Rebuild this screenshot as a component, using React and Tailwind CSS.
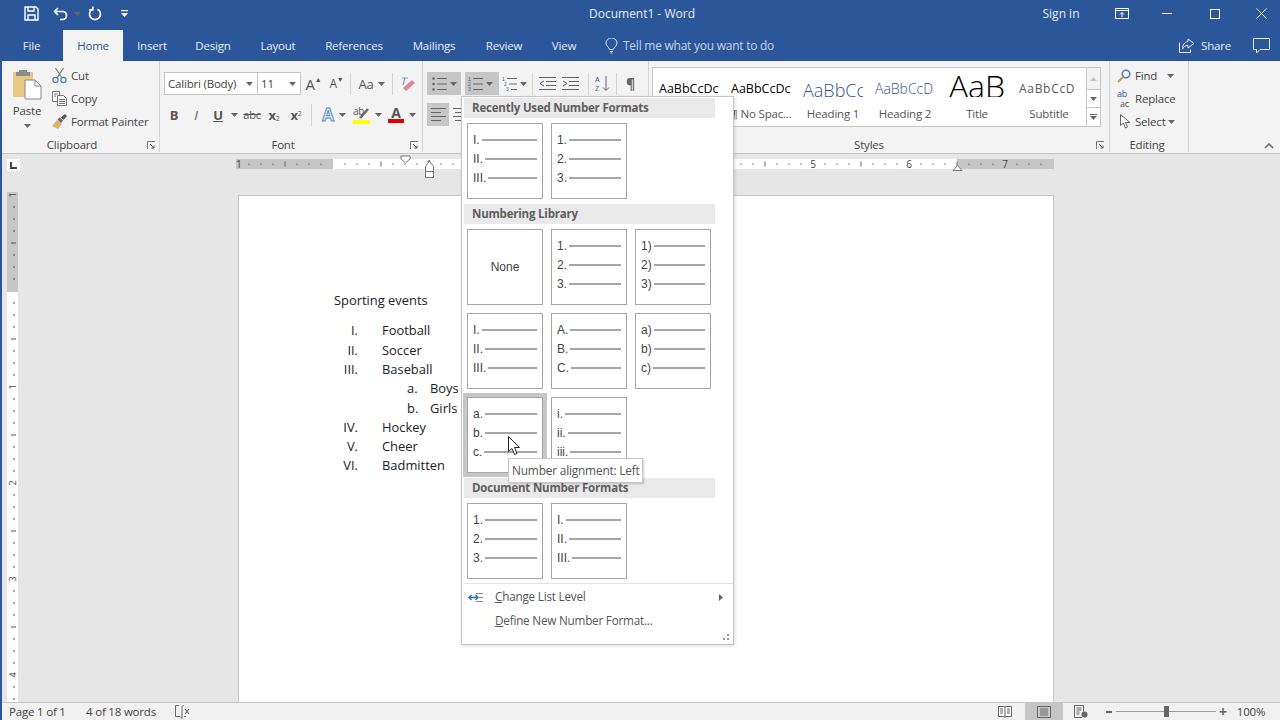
import React from "react";

const Caret = ({ className = "" }) => (
  <svg width="7" height="4" viewBox="0 0 7 4" className={className}>
    <path d="M0 0h7L3.5 4z" fill="#666" />
  </svg>
);

const Launcher = () => (
  <svg width="9" height="9" viewBox="0 0 9 9" fill="none" stroke="#777">
    <path d="M.5 8V.5H8" />
    <path d="M3 3l4 4M7 4.5V7H4.5" stroke="#555" />
  </svg>
);

function TitleBar() {
  return (
    <div className="flex h-[30px] items-center bg-[#2b579a] pb-[3px] text-[12px] tracking-normal text-[#e6ecf5]">
      <div className="flex w-[22px]" />
      <svg width="15" height="15" viewBox="0 0 15 15" fill="none" stroke="#fff" strokeWidth="1.4">
        <path d="M1 1h11l2 2v11H1z" />
        <path d="M4 1v4h6V1M4 14V9h7v5" />
      </svg>
      <svg className="ml-[14px]" width="16" height="15" viewBox="0 0 16 15" fill="none" stroke="#fff" strokeWidth="1.6">
        <path d="M5 2L1.5 5.5 5 9" />
        <path d="M2 5.5h7.5a4 4 0 0 1 0 8H7" />
      </svg>
      <Caret className="ml-[5px]" />
      <svg className="ml-[6px]" width="16" height="15" viewBox="0 0 16 15" fill="none" stroke="#fff" strokeWidth="1.6">
        <path d="M5.5 3.2a5.5 5.5 0 1 0 5 0" />
        <path d="M5.8 .5v3.4H2.2" />
      </svg>
      <svg className="ml-[18px]" width="7" height="8" viewBox="0 0 7 8" fill="#fff">
        <path d="M0 0h7v1.200H0zM0 3h7L3.500 7z" />
      </svg>
      <div className="ml-[459px] w-[110px] text-center">Document1 - Word</div>
      <div className="ml-[339px] w-[50px] text-center">Sign in</div>
      <svg className="ml-[29px]" width="14" height="11" viewBox="0 0 14 11" fill="none" stroke="#fff">
        <path d="M.5.5h13v10H.5zM.5 2.500h13M7 9V4.500M5 6.500l2-2 2 2" />
      </svg>
      <div className="ml-[33px] h-px w-[10px] bg-white" />
      <div className="ml-[38px] h-[10px] w-[10px] border border-white" />
      <svg className="ml-[36px]" width="11" height="11" viewBox="0 0 11 11" stroke="#fff">
        <path d="M.5.5l10 10M10.500.5l-10 10" />
      </svg>
    </div>
  );
}

function TabRow() {
  const tabs = [
    { name: "Insert", w: "w-[58px]" },
    { name: "Design", w: "w-[64px]" },
    { name: "Layout", w: "w-[66px]" },
    { name: "References", w: "w-[86px]" },
    { name: "Mailings", w: "w-[74px]" },
    { name: "Review", w: "w-[66px]" },
    { name: "View", w: "w-[54px]" },
  ];
  return (
    <div className="flex h-[31px] items-center bg-[#2b579a] text-[11.5px] text-[#e6ecf5]">
      <div className="w-[61px] pr-[2px] text-center">File</div>
      <div className="flex h-full w-[60px] items-center justify-center bg-[#f3f3f3] text-[#2b579a]">Home</div>
      {tabs.map((t) => (
        <div key={t.name} className={`${t.w} text-center`}>
          {t.name}
        </div>
      ))}
      <svg className="ml-[14px]" width="13" height="16" viewBox="0 0 13 16" fill="none" stroke="#dbe4f1">
        <path d="M4.500 11.500C4 9 1 8 1 5a5.500 5 0 0 1 11 0c0 3-3 4-3.500 6.500zM5 13.500h3M5.500 15h2" />
      </svg>
      <div className="ml-[5px] text-[12px] tracking-[-0.25px] text-[#c3d2e8]">Tell me what you want to do</div>
      <svg className="ml-[405px]" width="16" height="15" viewBox="0 0 16 15" fill="none" stroke="#e6ecf5">
        <path d="M.5 4.500v10h11v-3" />
        <path d="M9 1l6 4.500L9 10V7.500C6 7.500 4.500 9 3.500 11c0-4 2-7 5.500-7.500z" />
      </svg>
      <div className="ml-[4px] w-[34px] text-center">Share</div>
      <svg className="ml-[20px]" width="17" height="16" viewBox="0 0 17 16" fill="none" stroke="#e6ecf5">
        <path d="M.5.5h16v11H7l-3.500 3.500v-3.500H.5z" />
      </svg>
    </div>
  );
}

function ClipboardGroup() {
  return (
    <div className="flex h-full w-[158px] shrink-0 flex-col border-r border-[#d4d4d4]">
      <div className="flex h-[77px]">
        <div className="flex w-[50px] flex-col items-center pt-[7px]">
          <svg width="30" height="32" viewBox="0 0 30 32">
            <path d="M1 4h20v25H1z" fill="#e8c887" />
            <path d="M7 2h8v2h3v4H4V4h3z" fill="#8b8b8b" />
            <path d="M13 12h10l6 6v13H13z" fill="#fff" stroke="#888" />
            <path d="M23 12v6h6" fill="none" stroke="#888" />
          </svg>
          <div className="mt-[2px] leading-[18px]">Paste</div>
          <Caret className="mt-[4px]" />
        </div>
        <div className="flex flex-col pt-[3px]">
          <div className="flex h-[23px] items-center">
            <svg width="15" height="17" viewBox="0 0 15 17" fill="none" stroke="#4f7cb5" strokeWidth="1.2">
              <circle cx="3.500" cy="13" r="2.600" />
              <circle cx="11.500" cy="13" r="2.600" />
              <path d="M5 11L11.500 1M10 11L3.500 1" stroke="#777" />
            </svg>
            <span className="ml-[4px]">Cut</span>
          </div>
          <div className="flex h-[23px] items-center">
            <svg width="15" height="15" viewBox="0 0 15 15" fill="#fff" stroke="#777">
              <path d="M.5.5h7v10h-7z" />
              <path d="M5.500 4.500h6l3 3v7h-9z" />
              <path d="M7 8.500h6M7 10.500h6M7 12.500h6M2 3h4M2 5h2" fill="none" />
            </svg>
            <span className="ml-[4px]">Copy</span>
          </div>
          <div className="flex h-[23px] items-center">
            <svg width="15" height="15" viewBox="0 0 15 15">
              <path d="M0 12l5-6 5 4-4 5z" fill="#e0b26a" />
              <path d="M5.500 5.500l2-2 3.500 3-2 2.500z" fill="#666" />
              <path d="M9 3.500L13 0l2 2-3.500 4z" fill="#555" />
            </svg>
            <span className="ml-[4px]">Format Painter</span>
          </div>
        </div>
      </div>
      <div className="flex h-[14px] items-center">
        <div className="w-[140px] text-center">Clipboard</div>
        <div className="ml-[5px] flex">
          <Launcher />
        </div>
      </div>
    </div>
  );
}

function FontGroup() {
  return (
    <div className="flex h-full w-[263px] shrink-0 flex-col border-r border-[#d4d4d4]">
      <div className="h-[77px] pl-[4px] pt-[11px]">
        <div className="flex h-[23px] items-center">
          <div className="flex h-[23px] w-[94px] items-center justify-between border border-[#c6c6c6] bg-white pl-[3px] pr-[4px]">
            <span>Calibri (Body)</span>
            <Caret />
          </div>
          <div className="flex h-[23px] w-[43px] items-center justify-between border border-l-0 border-[#c6c6c6] bg-white pl-[3px] pr-[4px]">
            <span>11</span>
            <Caret />
          </div>
          <div className="flex w-[22px] items-center justify-center pl-[3px] text-[15px] text-[#555]">
            A<span className="-mt-[8px] text-[7px]">▲</span>
          </div>
          <div className="ml-[1px] flex w-[22px] items-center justify-center pl-[3px] text-[12px] text-[#555]">
            A<span className="-mt-[8px] text-[7px]">▼</span>
          </div>
          <div className="ml-[4px] h-[22px] w-px bg-[#d4d4d4]" />
          <div className="flex w-[41px] items-center justify-center gap-[4px] text-[13px] text-[#555]">
            Aa
            <Caret />
          </div>
          <div className="h-[22px] w-px bg-[#d4d4d4]" />
          <svg className="ml-[7px]" width="16" height="16" viewBox="0 0 16 16">
            <path d="M6 15l9-8-3-3-9 8z" fill="#e8818f" />
            <path d="M2 2h6M5 2L3 9" stroke="#7a9cc6" strokeWidth="1.200" fill="none" />
          </svg>
        </div>
        <div className="mt-[8px] flex h-[23px] items-center text-[#555]">
          <div className="w-[20px] text-center text-[13px] font-bold">B</div>
          <div className="ml-[2px] w-[20px] text-center text-[13px] italic">I</div>
          <div className="ml-[2px] w-[20px] text-center text-[13px] font-bold underline">U</div>
          <Caret className="ml-[3px]" />
          <div className="ml-[3px] w-[22px] text-center text-[11px] line-through">abc</div>
          <div className="w-[22px] text-center text-[13px] font-bold">
            x<sub className="text-[7px] font-normal">2</sub>
          </div>
          <div className="w-[22px] text-center text-[13px] font-bold">
            x<sup className="text-[7px] font-normal">2</sup>
          </div>
          <div className="ml-[4px] h-[22px] w-px bg-[#d4d4d4]" />
          <div className="ml-[8px] w-[16px] text-center text-[17px] font-bold text-[#e8f0fa] [-webkit-text-stroke:1px_#5b8fc9]">A</div>
          <Caret className="ml-[3px]" />
          <svg className="ml-[7px]" width="17" height="18" viewBox="0 0 17 18">
            <text x="0" y="9" fontSize="10" fill="#555" fontFamily="Open Sans">ab</text>
            <path d="M7 12L15 3" stroke="#666" strokeWidth="2.500" />
            <rect x="0" y="14" width="17" height="4" fill="#ffff00" />
          </svg>
          <Caret className="ml-[5px]" />
          <div className="ml-[6px] flex w-[16px] flex-col items-center">
            <span className="h-[13px] text-[14px] font-bold leading-[13px]">A</span>
            <div className="h-[4px] w-[16px] bg-[#e00000]" />
          </div>
          <Caret className="ml-[5px]" />
        </div>
      </div>
      <div className="flex h-[14px] items-center">
        <div className="w-[246px] text-center">Font</div>
        <div className="ml-[4px] flex">
          <Launcher />
        </div>
      </div>
    </div>
  );
}

function ListIcon({ kind }) {
  return (
    <svg width="15" height="14" viewBox="0 0 15 14" fill="none" stroke="#666">
      <path d={kind === "multi" ? "M5 1.500h10M7 7h8M9 12.500h6" : "M5 1.500h10M5 7h10M5 12.500h10"} />
      {kind === "bullet" ? (
        <g fill="#666" stroke="none">
          <circle cx="1.500" cy="1.500" r="1.300" />
          <circle cx="1.500" cy="7" r="1.300" />
          <circle cx="1.500" cy="12.500" r="1.300" />
        </g>
      ) : (
        <g fill="#2b579a" stroke="none" fontSize="5" fontFamily="Liberation Sans">
          <text x="0" y="4">1</text>
          <text x={kind === "multi" ? "2" : "0"} y="9">2</text>
          <text x={kind === "multi" ? "4" : "0"} y="14">3</text>
        </g>
      )}
    </svg>
  );
}

function ParagraphGroup() {
  return (
    <div className="h-full w-[226px] shrink-0 border-r border-[#d4d4d4] pl-[4px] pt-[11px]">
      <div className="flex h-[23px] items-center">
        <div className="flex h-[23px] w-[34px] items-center justify-center gap-[3px] bg-[#c6c6c6]">
          <ListIcon kind="bullet" />
          <Caret />
        </div>
        <div className="ml-[4px] flex h-[23px] w-[34px] items-center gap-[3px] bg-[#c6c6c6] pl-[3px]">
          <ListIcon kind="num" />
          <Caret />
        </div>
        <div className="ml-[3px] flex items-center gap-[3px]">
          <ListIcon kind="multi" />
          <Caret />
        </div>
        <div className="ml-[5px] h-[22px] w-px bg-[#d4d4d4]" />
        <svg className="ml-[6px]" width="17" height="13" viewBox="0 0 17 13" fill="none" stroke="#666">
          <path d="M0 .5h17M7 4.500h10M7 8.500h10M0 12.500h17" />
          <path d="M5 4L1 6.500 5 9" stroke="#2b579a" />
        </svg>
        <svg className="ml-[6px]" width="17" height="13" viewBox="0 0 17 13" fill="none" stroke="#666">
          <path d="M0 .5h17M7 4.500h10M7 8.500h10M0 12.500h17" />
          <path d="M1 4l4 2.500L1 9" stroke="#2b579a" />
        </svg>
        <div className="ml-[9px] h-[22px] w-px bg-[#d4d4d4]" />
        <svg className="ml-[6px]" width="15" height="17" viewBox="0 0 15 17" fill="none" stroke="#666">
          <path d="M11 1v14M8 12.500l3 3 3-3" />
          <text x="0" y="7" fontSize="7" fill="#2b579a" stroke="none" fontFamily="Liberation Sans">A</text>
          <text x="0" y="16" fontSize="7" fill="#666" stroke="none" fontFamily="Liberation Sans">Z</text>
        </svg>
        <div className="ml-[6px] h-[22px] w-px bg-[#d4d4d4]" />
        <div className="ml-[9px] text-[14px] font-bold leading-none text-[#666]">¶</div>
      </div>
      <div className="mt-[8px] flex h-[23px] items-center">
        <div className="flex h-[23px] w-[22px] items-center justify-center bg-[#c6c6c6]">
          <svg width="15" height="13" viewBox="0 0 15 13" stroke="#666">
            <path d="M0 .5h15M0 4.500h10M0 8.500h15M0 12.500h10" />
          </svg>
        </div>
        <svg className="ml-[4px]" width="9" height="13" viewBox="0 0 9 13" stroke="#666">
          <path d="M0 .5h9M2 4.500h7M0 8.500h9M2 12.500h7" />
        </svg>
      </div>
    </div>
  );
}

function StylesGroup() {
  const styles = [
    { name: "¶ Normal", preview: "AaBbCcDc", cls: "pt-[7px] text-[12.5px] tracking-normal text-black" },
    { name: "¶ No Spac...", preview: "AaBbCcDc", cls: "pt-[7px] text-[12.5px] tracking-normal text-black" },
    { name: "Heading 1", preview: "AaBbCc", cls: "pt-[8px] text-[18px] font-light tracking-normal text-[#2f5496]" },
    { name: "Heading 2", preview: "AaBbCcD", cls: "pt-[7px] text-[14px] font-light tracking-normal text-[#2f5496]" },
    { name: "Title", preview: "AaB", cls: "justify-center text-[32px] font-light leading-none tracking-normal text-black" },
    { name: "Subtitle", preview: "AaBbCcD", cls: "pt-[7px] text-[12px] tracking-[0.7px] text-[#5a5a5a]" },
  ];
  return (
    <div className="flex h-full w-[461px] shrink-0 flex-col border-r border-[#d4d4d4] pl-[3px] pt-[6px]">
      <div className="flex h-[60px] w-[449px] border border-[#c6c6c6] bg-white">
        {styles.map((s) => (
          <div key={s.name} className="flex w-[72px] shrink-0 flex-col items-center">
            <div className={`mt-[6px] flex h-[23px] w-[60px] items-center overflow-hidden whitespace-nowrap ${s.cls}`}>
              {s.preview}
            </div>
            <div className="mt-[8px] whitespace-nowrap leading-[18px] text-[#555]">{s.name}</div>
          </div>
        ))}
        <div className="ml-auto flex w-[14px] flex-col border-l border-[#c6c6c6]">
          <div className="flex h-[21px] items-center justify-center bg-[#f3f3f3]">
            <svg width="7" height="4" viewBox="0 0 7 4">
              <path d="M0 4h7L3.500 0z" fill="#c6c6c6" />
            </svg>
          </div>
          <div className="flex h-[19px] items-center justify-center border-y border-[#c6c6c6]">
            <Caret />
          </div>
          <div className="flex flex-1 flex-col items-center justify-center gap-[1px]">
            <div className="h-px w-[7px] bg-[#666]" />
            <Caret />
          </div>
        </div>
      </div>
      <div className="mt-[11px] flex h-[14px] items-center">
        <div className="w-[434px] text-center">Styles</div>
        <div className="ml-[10px] flex">
          <Launcher />
        </div>
      </div>
    </div>
  );
}

function EditingGroup() {
  return (
    <div className="flex h-full w-[79px] shrink-0 flex-col border-r border-[#d4d4d4]">
      <div className="h-[77px] pl-[7px] pt-[3px]">
        <div className="flex h-[23px] items-center">
          <svg width="14" height="14" viewBox="0 0 14 14" fill="none">
            <circle cx="9" cy="5" r="3.800" stroke="#4f7cb5" strokeWidth="1.500" />
            <path d="M6 8L1 13" stroke="#c79a4b" strokeWidth="2" />
          </svg>
          <span className="ml-[4px]">Find</span>
          <Caret className="ml-[10px]" />
        </div>
        <div className="flex h-[23px] items-center">
          <span className="flex w-[16px] flex-col text-[9px] leading-[10px]">
            <span className="text-[#2b579a]">ab</span>
            <span className="pl-[3px] text-[#555]">ac</span>
          </span>
          <span className="ml-[2px]">Replace</span>
        </div>
        <div className="flex h-[23px] items-center">
          <svg className="ml-[3px]" width="11" height="15" viewBox="0 0 11 15" fill="#fff" stroke="#666">
            <path d="M.5.500v11l3-2.500 2 5 2-1-2-4.500h4.500z" />
          </svg>
          <span className="ml-[4px]">Select</span>
          <Caret className="ml-[2px]" />
        </div>
      </div>
      <div className="flex h-[14px] items-center">
        <div className="w-[74px] text-center">Editing</div>
      </div>
    </div>
  );
}

function Ribbon() {
  return (
    <div className="flex h-[93px] border-b border-[#c6c6c6] bg-[#f3f3f3] pb-[1px] text-[11.5px] leading-[14px] text-[#444]">
      <ClipboardGroup />
      <FontGroup />
      <ParagraphGroup />
      <StylesGroup />
      <EditingGroup />
      <div className="flex flex-1 items-end justify-end pb-[3px] pr-[6px]">
        <svg width="10" height="6" viewBox="0 0 10 6" fill="none" stroke="#666" strokeWidth="1.500">
          <path d="M1 5l4-4 4 4" />
        </svg>
      </div>
    </div>
  );
}

function HRuler() {
  const ticks = [];
  for (let k = -7; k < 60; k++) ticks.push(k * 12);
  return (
    <svg width="818" height="26" viewBox="0 0 818 26">
      <rect x="0" y="5" width="97" height="10" fill="#c6c6c6" />
      <rect x="97" y="5" width="624" height="10" fill="#fff" />
      <rect x="721" y="5" width="97" height="10" fill="#c6c6c6" />
      {ticks.map((x) => {
        const px = x + 97;
        if (x % 96 === 0) return null;
        return x % 48 === 0 ? (
          <path key={x} d={`M${px} 7.500v5`} stroke="#666" />
        ) : (
          <path key={x} d={`M${px} 9.500v1.500`} stroke="#666" />
        );
      })}
      {[1, 2, 3, 4, 5, 6, 7].map((n) => (
        <text key={n} x={97 + n * 96} y="13.500" fontSize="10" fill="#444" textAnchor="middle" fontFamily="Open Sans">
          {n}
        </text>
      ))}
      <text x="0" y="13.500" fontSize="10" fill="#444" fontFamily="Open Sans">1</text>
      <path d="M165 2h9v3l-4.500 4-4.500-4z" fill="#fff" stroke="#777" />
      <path d="M189.500 12.500L193.500 7l4 5.500v5h-8zM189.500 17.500h8v6h-8z" fill="#fff" stroke="#777" />
      <path d="M717 16.500l4.500-5 4.500 5z" fill="#fff" stroke="#777" />
    </svg>
  );
}

function VRuler() {
  const ticks = [];
  for (let i = 0; i < 44; i++) ticks.push(i * 12);
  return (
    <svg width="11" height="510" viewBox="0 0 11 510">
      <rect x="0" y="0" width="11" height="100" fill="#c6c6c6" />
      <rect x="0" y="100" width="11" height="410" fill="#fff" />
      {ticks.map((y) => {
        if (y % 96 === 0) return null;
        return y % 48 === 0 ? (
          <path key={y} d={`M4 ${y + 3}h5`} stroke="#555" />
        ) : (
          <path key={y} d={`M6 ${y + 3}h2`} stroke="#555" />
        );
      })}
      {[
        { y: 3, n: 1 },
        { y: 195, n: 1 },
        { y: 291, n: 2 },
        { y: 387, n: 3 },
        { y: 483, n: 4 },
      ].map((t) => (
        <text
          key={t.y}
          x="0"
          y="0"
          fontSize="9"
          fill="#444"
          textAnchor="middle"
          fontFamily="Open Sans"
          transform={`translate(9 ${t.y}) rotate(-90)`}
        >
          {t.n}
        </text>
      ))}
    </svg>
  );
}

function DocPage() {
  const items = [
    { n: "I.", t: "Football" },
    { n: "II.", t: "Soccer" },
    { n: "III.", t: "Baseball" },
    { n: "a.", t: "Boys", sub: true },
    { n: "b.", t: "Girls", sub: true },
    { n: "IV.", t: "Hockey" },
    { n: "V.", t: "Cheer" },
    { n: "VI.", t: "Badmitten" },
  ];
  return (
    <div className="ml-[220px] h-full w-[816px] border-x border-t border-[#c6c6c6] bg-white pl-[95px] pt-[95px] text-[12.9px] leading-[19px] tracking-normal text-[#222]">
      <div>Sporting events</div>
      <div className="mt-[11.4px]">
        {items.map((it) =>
          it.sub ? (
            <div key={it.t} className="flex h-[19.3px] pl-[73px]">
              <div className="w-[23px]">{it.n}</div>
              <div>{it.t}</div>
            </div>
          ) : (
            <div key={it.t} className="flex h-[19.3px]">
              <div className="w-[24px] text-right">{it.n}</div>
              <div className="ml-[24px]">{it.t}</div>
            </div>
          )
        )}
      </div>
    </div>
  );
}

function NumberCell({ labels, none, selected }) {
  return (
    <div
      className={`h-[76px] w-[76px] shrink-0 border border-[#a6a6a6] bg-white font-['Liberation_Sans',sans-serif] text-[12px] tracking-normal text-[#444] ${
        selected ? "shadow-[0_0_0_4px_#c6c6c6]" : ""
      }`}
    >
      {none ? (
        <div className="flex h-full items-center justify-center">None</div>
      ) : (
        <div className="px-[5px] pt-[6px]">
          {labels.map((l) => (
            <div key={l} className="flex h-[19px] items-center">
              <span className="leading-none">{l}</span>
              <div className="ml-[2px] h-[2px] flex-1 bg-[#a6a6a6]" />
            </div>
          ))}
        </div>
      )}
    </div>
  );
}

const upper = ["I.", "II.", "III."];
const nums = ["1.", "2.", "3."];

function MenuHeader({ children, className = "" }) {
  return (
    <div className={`flex h-[20px] w-[251px] items-center bg-[#e9e9e9] pl-[8px] text-[11.5px] font-bold text-[#5e5e5e] ${className}`}>
      {children}
    </div>
  );
}

function NumberingMenu() {
  return (
    <div className="absolute left-[459px] top-[96px] h-[549px] w-[273px] border border-[#c6c6c6] bg-white pl-[2px] pt-[1px] text-[11.7px] text-[#555] shadow-[1px_1px_3px_rgba(0,0,0,0.15)]">
      <MenuHeader>Recently Used Number Formats</MenuHeader>
      <div className="ml-[3px] mt-[5px] flex gap-[8px]">
        <NumberCell labels={upper} />
        <NumberCell labels={nums} />
      </div>
      <MenuHeader className="mt-[5px]">Numbering Library</MenuHeader>
      <div className="ml-[3px] mt-[5px] flex gap-[8px]">
        <NumberCell none />
        <NumberCell labels={nums} />
        <NumberCell labels={["1)", "2)", "3)"]} />
      </div>
      <div className="ml-[3px] mt-[8px] flex gap-[8px]">
        <NumberCell labels={upper} />
        <NumberCell labels={["A.", "B.", "C."]} />
        <NumberCell labels={["a)", "b)", "c)"]} />
      </div>
      <div className="ml-[3px] mt-[8px] flex gap-[8px]">
        <NumberCell labels={["a.", "b.", "c."]} selected />
        <NumberCell labels={["i.", "ii.", "iii."]} />
      </div>
      <MenuHeader className="relative mt-[5px]">Document Number Formats</MenuHeader>
      <div className="ml-[3px] mt-[5px] flex gap-[8px]">
        <NumberCell labels={nums} />
        <NumberCell labels={upper} />
      </div>
      <div className="mt-[4px] h-px bg-[#e1e1e1]" />
      <div className="flex h-[24px] items-center pl-[4px] pt-[2px]">
        <svg width="15" height="9" viewBox="0 0 15 9" fill="none">
          <path d="M1 4.500h9M3.500 2L1 4.500 3.500 7M7.500 2L10 4.500 7.500 7" stroke="#2b6cb0" strokeWidth="1.300" />
          <path d="M8 .5h7M11 4.500h4M8 8.500h7" stroke="#888" />
        </svg>
        <div className="ml-[12px]">
          <span className="underline">C</span>hange List Level
        </div>
        <svg className="ml-auto mr-[10px]" width="4" height="7" viewBox="0 0 4 7">
          <path d="M0 0l4 3.500L0 7z" fill="#666" />
        </svg>
      </div>
      <div className="flex h-[24px] items-center pl-[31px] pt-[2px]">
        <span className="underline">D</span>efine New Number Format...
      </div>
      <div className="mt-[2px] flex justify-end pr-[4px]">
        <svg width="6" height="6" viewBox="0 0 6 6" fill="#999">
          <path d="M4 0h2v2H4zM0 4h2v2H0zM4 4h2v2H4z" />
        </svg>
      </div>
    </div>
  );
}

function StatusBar() {
  return (
    <div className="flex h-[18px] items-center border-t border-[#c6c6c6] bg-[#f1f1f1] text-[11.5px] text-[#444]">
      <div className="ml-[7px] w-[77px] whitespace-nowrap">Page 1 of 1</div>
      <div className="w-[85px] whitespace-nowrap">4 of 18 words</div>
      <svg className="ml-[4px]" width="15" height="14" viewBox="0 0 15 14" fill="none" stroke="#666">
        <path d="M4 .5H.5v11H5l2 2V2.500M7 2.500C7 1 8 .5 9 .5M11 11.500H9" />
        <path d="M10 4l4 5M14 4l-4 5" stroke="#555" />
      </svg>
      <svg className="ml-[808px]" width="14" height="12" viewBox="0 0 14 12" fill="#fff" stroke="#666">
        <path d="M.5.500h6l.5 1 .5-1h6v10h-6l-.5 1-.5-1h-6z" />
        <path d="M7 1.500v9M2 3h3M2 5h3M2 7h3M9 3h3M9 5h3M9 7h3" fill="none" />
      </svg>
      <div className="ml-[13px] flex h-full w-[38px] items-center justify-center bg-[#c6c6c6]">
        <svg width="14" height="12" viewBox="0 0 14 12" fill="none" stroke="#666">
          <path d="M.5.500h13v11H.5zM3 3h8M3 5h8M3 7h8M3 9h8" />
        </svg>
      </div>
      <svg className="ml-[11px]" width="14" height="13" viewBox="0 0 14 13" fill="none" stroke="#666">
        <path d="M8 12.500H.5V.500h9v6M2.500 3h5M2.500 5h5M2.500 7h3M2.500 9h3" />
        <circle cx="10.500" cy="9.500" r="3" fill="#666" stroke="none" />
      </svg>
      <div className="ml-[18px] h-[2px] w-[6px] bg-[#666]" />
      <div className="relative ml-[4px] flex h-[10px] w-[100px] items-center">
        <div className="h-px w-full bg-[#999]" />
        <div className="absolute left-[48px] h-[11px] w-[5px] bg-[#666]" />
      </div>
      <div className="ml-[3px] text-[14px] font-bold leading-none text-[#666]">+</div>
      <div className="ml-[10px] whitespace-nowrap">100%</div>
    </div>
  );
}

export default function App() {
  return (
    <div className="relative flex h-[720px] w-[1280px] flex-col overflow-hidden border-l-2 border-[#2b579a] bg-[#e6e6e6] font-['Open_Sans',sans-serif] tracking-[-0.2px]">
      <TitleBar />
      <TabRow />
      <Ribbon />
      <div className="flex h-[41px] shrink-0 items-start">
        <div className="ml-[5px] mt-[5px] flex h-[12px] w-[13px] items-center justify-center bg-white">
          <svg width="7" height="7" viewBox="0 0 7 7" fill="none" stroke="#444" strokeWidth="2">
            <path d="M1 0v6h6" />
          </svg>
        </div>
        <div className="ml-[216px]">
          <HRuler />
        </div>
      </div>
      <div className="flex min-h-0 flex-1">
        <div className="ml-[5px] shrink-0 -mt-[3px]">
          <VRuler />
        </div>
        <DocPage />
      </div>
      <StatusBar />
      <NumberingMenu />
      <svg className="absolute left-[506px] top-[436px]" width="13" height="20" viewBox="0 0 13 20">
        <path d="M.5.500v15l3.500-3 2.500 6 2.500-1-2.500-6h5z" fill="#fff" stroke="#222" />
      </svg>
      <div className="absolute left-[506px] top-[458px] flex h-[25px] w-[135px] items-center border border-[#c6c6c6] bg-white pl-[3px] text-[11.9px] text-[#555] shadow-[1px_1px_2px_rgba(0,0,0,0.2)]">
        Number alignment: Left
      </div>
    </div>
  );
}
